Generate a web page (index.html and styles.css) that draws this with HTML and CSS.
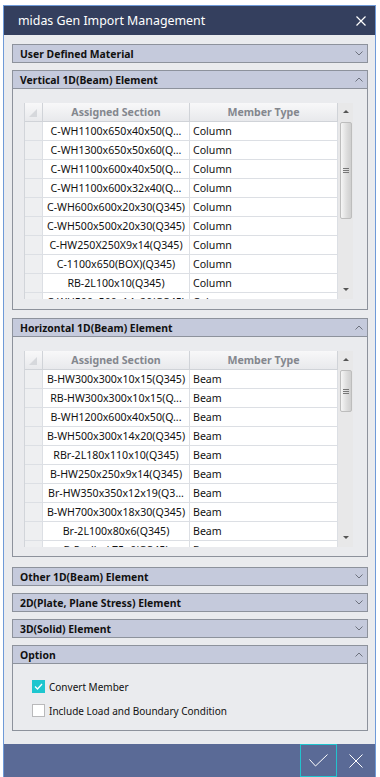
FILE: index.html
```html
<!DOCTYPE html>
<html lang="en">
<head>
    <meta charset="UTF-8">
    <meta name="viewport" content="width=device-width, initial-scale=1.0">
    <title>midas Gen Import Management</title>
    <link rel="stylesheet" href="styles.css">
</head>
<body>
    <div class="window">
        <div class="titlebar">
            <span class="title">midas Gen Import Management</span>
            <svg class="title-close" width="10" height="10" viewBox="0 0 10 10">
                <path d="M0.5 0.5 L9.5 9.5 M9.5 0.5 L0.5 9.5" stroke="#fff" stroke-width="1.2" fill="none"/>
            </svg>
        </div>

        <div class="content">
            <section class="panel collapsed">
                <div class="panel-head">
                    <span>User Defined Material</span>
                    <svg class="chev" width="8" height="5" viewBox="0 0 8 5"><path d="M0.5 0.5 L4 4 L7.5 0.5" stroke="#6d727e" fill="none"/></svg>
                </div>
            </section>

            <section class="panel panel-v">
                <div class="panel-head">
                    <span>Vertical 1D(Beam) Element</span>
                    <svg class="chev" width="8" height="5" viewBox="0 0 8 5"><path d="M0.5 4.5 L4 1 L7.5 4.5" stroke="#6d727e" fill="none"/></svg>
                </div>
                <div class="panel-body">
                    <div class="grid">
                        <div class="table">
                            <div class="row head">
                                <div class="cell corner"><span class="tri"></span></div>
                                <div class="cell">Assigned Section</div>
                                <div class="cell">Member Type</div>
                            </div>
                            <div class="row"><div class="cell rh"></div><div class="cell sec">C-WH1100x650x40x50(Q...</div><div class="cell type">Column</div></div>
                            <div class="row"><div class="cell rh"></div><div class="cell sec">C-WH1300x650x50x60(Q...</div><div class="cell type">Column</div></div>
                            <div class="row"><div class="cell rh"></div><div class="cell sec">C-WH1100x600x40x50(Q...</div><div class="cell type">Column</div></div>
                            <div class="row"><div class="cell rh"></div><div class="cell sec">C-WH1100x600x32x40(Q...</div><div class="cell type">Column</div></div>
                            <div class="row"><div class="cell rh"></div><div class="cell sec">C-WH600x600x20x30(Q345)</div><div class="cell type">Column</div></div>
                            <div class="row"><div class="cell rh"></div><div class="cell sec">C-WH500x500x20x30(Q345)</div><div class="cell type">Column</div></div>
                            <div class="row"><div class="cell rh"></div><div class="cell sec">C-HW250X250X9x14(Q345)</div><div class="cell type">Column</div></div>
                            <div class="row"><div class="cell rh"></div><div class="cell sec">C-1100x650(BOX)(Q345)</div><div class="cell type">Column</div></div>
                            <div class="row"><div class="cell rh"></div><div class="cell sec">RB-2L100x10(Q345)</div><div class="cell type">Column</div></div>
                            <div class="row"><div class="cell rh"></div><div class="cell sec">C-WH500x500x14x20(Q345)</div><div class="cell type">Column</div></div>
                        </div>
                        <div class="sbar">
                            <span class="arrow up"></span>
                            <div class="thumb thumb-v"><span class="grip"></span></div>
                            <span class="arrow down"></span>
                        </div>
                    </div>
                </div>
            </section>

            <section class="panel panel-h">
                <div class="panel-head">
                    <span>Horizontal 1D(Beam) Element</span>
                    <svg class="chev" width="8" height="5" viewBox="0 0 8 5"><path d="M0.5 4.5 L4 1 L7.5 4.5" stroke="#6d727e" fill="none"/></svg>
                </div>
                <div class="panel-body">
                    <div class="grid">
                        <div class="table">
                            <div class="row head">
                                <div class="cell corner"><span class="tri"></span></div>
                                <div class="cell">Assigned Section</div>
                                <div class="cell">Member Type</div>
                            </div>
                            <div class="row"><div class="cell rh"></div><div class="cell sec">B-HW300x300x10x15(Q345)</div><div class="cell type">Beam</div></div>
                            <div class="row"><div class="cell rh"></div><div class="cell sec">RB-HW300x300x10x15(Q...</div><div class="cell type">Beam</div></div>
                            <div class="row"><div class="cell rh"></div><div class="cell sec">B-WH1200x600x40x50(Q...</div><div class="cell type">Beam</div></div>
                            <div class="row"><div class="cell rh"></div><div class="cell sec">B-WH500x300x14x20(Q345)</div><div class="cell type">Beam</div></div>
                            <div class="row"><div class="cell rh"></div><div class="cell sec">RBr-2L180x110x10(Q345)</div><div class="cell type">Beam</div></div>
                            <div class="row"><div class="cell rh"></div><div class="cell sec">B-HW250x250x9x14(Q345)</div><div class="cell type">Beam</div></div>
                            <div class="row"><div class="cell rh"></div><div class="cell sec">Br-HW350x350x12x19(Q3...</div><div class="cell type">Beam</div></div>
                            <div class="row"><div class="cell rh"></div><div class="cell sec">B-WH700x300x18x30(Q345)</div><div class="cell type">Beam</div></div>
                            <div class="row"><div class="cell rh"></div><div class="cell sec">Br-2L100x80x6(Q345)</div><div class="cell type">Beam</div></div>
                            <div class="row"><div class="cell rh"></div><div class="cell sec">B-Purlin-L75x6(Q345)</div><div class="cell type">Beam</div></div>
                        </div>
                        <div class="sbar">
                            <span class="arrow up"></span>
                            <div class="thumb thumb-h"><span class="grip"></span></div>
                            <span class="arrow down"></span>
                        </div>
                    </div>
                </div>
            </section>

            <section class="panel collapsed">
                <div class="panel-head">
                    <span>Other 1D(Beam) Element</span>
                    <svg class="chev" width="8" height="5" viewBox="0 0 8 5"><path d="M0.5 0.5 L4 4 L7.5 0.5" stroke="#6d727e" fill="none"/></svg>
                </div>
            </section>

            <section class="panel collapsed">
                <div class="panel-head">
                    <span>2D(Plate, Plane Stress) Element</span>
                    <svg class="chev" width="8" height="5" viewBox="0 0 8 5"><path d="M0.5 0.5 L4 4 L7.5 0.5" stroke="#6d727e" fill="none"/></svg>
                </div>
            </section>

            <section class="panel collapsed">
                <div class="panel-head">
                    <span>3D(Solid) Element</span>
                    <svg class="chev" width="8" height="5" viewBox="0 0 8 5"><path d="M0.5 0.5 L4 4 L7.5 0.5" stroke="#6d727e" fill="none"/></svg>
                </div>
            </section>

            <section class="panel panel-opt">
                <div class="panel-head">
                    <span>Option</span>
                    <svg class="chev" width="8" height="5" viewBox="0 0 8 5"><path d="M0.5 4.5 L4 1 L7.5 4.5" stroke="#6d727e" fill="none"/></svg>
                </div>
                <div class="panel-body options">
                    <label class="check">
                        <span class="box checked">
                            <svg width="13" height="13" viewBox="0 0 13 13"><path d="M3 6.5 L5.5 9 L10 4" stroke="#fff" stroke-width="1.3" fill="none"/></svg>
                        </span>
                        Convert Member
                    </label>
                    <label class="check">
                        <span class="box"></span>
                        Include Load and Boundary Condition
                    </label>
                </div>
            </section>
        </div>

        <div class="footer">
            <button class="btn ok">
                <svg width="19" height="13" viewBox="0 0 19 13"><path d="M0.5 5.5 L6.5 12 L18.5 0.5" stroke="#fff" stroke-width="1" fill="none"/></svg>
            </button>
            <button class="btn cancel">
                <svg width="14" height="14" viewBox="0 0 14 14"><path d="M0.5 0.5 L13.5 13.5 M13.5 0.5 L0.5 13.5" stroke="#fff" stroke-width="1" fill="none"/></svg>
            </button>
        </div>
    </div>
</body>
</html>
```

FILE: styles.css
```css
* {
    box-sizing: border-box;
}

body {
    margin: 0;
    background-color: #fff;
    font-family: "Noto Sans", "Open Sans", sans-serif;
    font-size: 10px;
    color: #111;
}

.window {
    margin: 5px 4px 0 3px;
    height: 772px;
    display: flex;
    flex-direction: column;
    border: 1px solid #6f9ad8;
    border-bottom: none;
    background-color: #eaebee;
}

.titlebar {
    height: 29px;
    flex-shrink: 0;
    display: flex;
    align-items: center;
    justify-content: space-between;
    padding: 0 9px 0 14px;
    background-color: #343f5e;
    color: #fff;
}

.title {
    font-size: 12.4px;
}

.content {
    flex: 1;
    padding: 9px 7px 0 8px;
}

.panel {
    border: 1px solid #8d929c;
    margin-bottom: 7px;
}

.panel-head {
    height: 17px;
    display: flex;
    align-items: center;
    justify-content: space-between;
    padding: 0 4px 0 7px;
    background-color: #c5cadc;
    font-weight: bold;
    font-size: 10.4px;
}

.panel-body {
    border-top: 1px solid #8d929c;
}

.panel-v {
    margin-bottom: 8px;
}

.panel-h {
    margin-bottom: 10px;
}

.grid {
    display: flex;
    height: 196px;
    margin: 14px 13px 10px 11px;
}

.panel-h .grid {
    margin-bottom: 9px;
}

.table {
    width: 314px;
    overflow: hidden;
    background-color: #fff;
    border-left: 1px solid #d2d5da;
    font-size: 10.6px;
}

.row {
    display: grid;
    grid-template-columns: 18px 147px 148px;
    height: 19px;
}

.cell {
    border-right: 1px solid #dcdfe4;
    border-bottom: 1px solid #dcdfe4;
    white-space: nowrap;
    overflow: hidden;
    line-height: 18px;
}

.row.head .cell {
    background: linear-gradient(#f8f8f9, #e8e9ec);
    border-color: #d0d3d8;
    color: #84878e;
    font-weight: bold;
    text-align: center;
}

.cell.corner {
    position: relative;
}

.tri {
    position: absolute;
    right: 5px;
    bottom: 4px;
    width: 0;
    height: 0;
    border-left: 8px solid transparent;
    border-bottom: 8px solid #d6d8dc;
}

.cell.rh {
    background-color: #eeeff1;
}

.cell.sec {
    text-align: center;
    padding: 0 1px;
}

.cell.type {
    padding-left: 3px;
}

.sbar {
    width: 15px;
    display: flex;
    flex-direction: column;
    align-items: center;
    background-color: #e8e8e9;
    position: relative;
}

.arrow {
    position: absolute;
    left: 5px;
    width: 0;
    height: 0;
    border-left: 3px solid transparent;
    border-right: 3px solid transparent;
}

.arrow.up {
    top: 7px;
    border-bottom: 3px solid #555;
}

.arrow.down {
    bottom: 8px;
    border-top: 3px solid #555;
}

.thumb {
    margin-top: 19px;
    width: 12px;
    display: flex;
    align-items: center;
    justify-content: center;
    border: 1px solid #bdbdbd;
    border-radius: 2px;
    background: linear-gradient(to right, #f6f6f6, #dcdcdc 60%, #cfcfcf);
}

.thumb-v {
    height: 97px;
}

.thumb-h {
    height: 42px;
}

.grip {
    width: 6px;
    height: 5px;
    border-top: 1px solid #777;
    border-bottom: 1px solid #777;
    position: relative;
}

.grip::after {
    content: "";
    position: absolute;
    left: 0;
    right: 0;
    top: 1px;
    border-top: 1px solid #777;
}

.options {
    height: 67px;
    padding: 16px 0 0 19px;
}

.check {
    display: flex;
    align-items: center;
    gap: 4px;
    height: 13px;
    margin-bottom: 11px;
    font-size: 10px;
}

.box {
    width: 13px;
    height: 13px;
    border: 1px solid #b9b9bb;
    background-color: #fff;
    display: flex;
}

.box.checked {
    border: none;
    background-color: #1ec6cf;
}

.footer {
    height: 33px;
    flex-shrink: 0;
    display: flex;
    justify-content: flex-end;
    background-color: #5a6a96;
}

.btn {
    height: 33px;
    border: 1px solid transparent;
    background: none;
    padding: 0;
    display: flex;
    align-items: center;
    justify-content: center;
}

.btn.ok {
    width: 37px;
    border-color: #22c3ce;
}

.btn.cancel {
    width: 38px;
}
```
